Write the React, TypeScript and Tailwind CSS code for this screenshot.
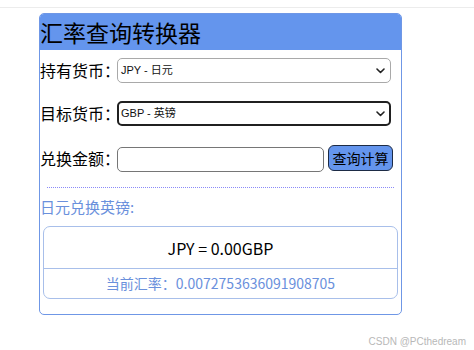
import React from "react";

const cjk = { fontFamily: '"Noto Sans CJK SC", "Noto Sans", sans-serif' };
const selFont = { fontFamily: '"Liberation Sans", "Noto Sans CJK SC", sans-serif' };

function Chevron() {
  return (
    <svg width="9" height="6" viewBox="0 0 9 6" className="shrink-0">
      <path d="M1 1 L4.5 4.5 L8 1" fill="none" stroke="#222" strokeWidth="1.6" strokeLinecap="round" strokeLinejoin="round" />
    </svg>
  );
}

function FakeSelect({ text, focused }: { text: string; focused?: boolean }) {
  return (
    <div
      className={
        focused
          ? "shrink-0 w-[274px] h-[25px] rounded-[5px] border-2 border-[#202020] bg-white flex items-center justify-between pl-[2px] pr-[4px]"
          : "shrink-0 w-[274px] h-[25px] rounded-[5px] border border-[#a9a9a9] bg-white flex items-center justify-between pl-[3px] pr-[5px]"
      }
    >
      <span className="text-[11px] text-[#111] whitespace-nowrap" style={selFont}>{text}</span>
      <Chevron />
    </div>
  );
}

export default function App() {
  return (
    <div className="relative w-[474px] h-[350px] bg-white overflow-hidden" style={cjk}>
      <div className="h-[8px] border-b border-[#ececec]" />
      <div className="ml-[39px] mt-[5px] w-[363px] h-[302px] border border-[#6f97e6] rounded-[5px] overflow-hidden">
        <div className="h-[36px] bg-[#6495ed] text-[23px] leading-[36px] text-black whitespace-nowrap">汇率查询转换器</div>
        <div className="flex items-center mt-[8px] h-[25px]">
          <div className="shrink-0 w-[77px] text-[16px] text-black leading-[25px] whitespace-nowrap">持有货币：</div>
          <FakeSelect text="JPY - 日元" />
        </div>
        <div className="flex items-center mt-[18px] h-[25px]">
          <div className="shrink-0 w-[77px] text-[16px] text-black leading-[25px] whitespace-nowrap">目标货币：</div>
          <FakeSelect text="GBP - 英镑" focused />
        </div>
        <div className="flex items-start mt-[19px] h-[27px]">
          <div className="shrink-0 w-[77px] text-[16px] text-black leading-[25px] mt-[1px] whitespace-nowrap">兑换金额：</div>
          <div className="shrink-0 mt-[2px] w-[207px] h-[25px] rounded-[5px] border-[1.5px] border-[#767676] bg-white" />
          <div className="shrink-0 ml-[4px] w-[65px] h-[26px] rounded-[6px] border-[1.5px] border-[#1d2b45] bg-[#6495ed] flex items-center justify-center text-[14px] text-black whitespace-nowrap">
            查询计算
          </div>
        </div>
        <div className="mt-[15px] mx-[7px] border-t border-dotted border-[#8a8af8]" />
        <div className="mt-[9px] text-[15px] leading-[20px] text-[#6a90dc] whitespace-nowrap">日元兑换英镑:</div>
        <div className="mt-[9px] mx-[3px] h-[73px] border border-[#a8bfea] rounded-[7px] flex flex-col">
          <div className="h-[42px] border-b border-[#a8bfea] flex items-center justify-center text-[16px] text-black whitespace-nowrap">
            JPY = 0.00GBP
          </div>
          <div className="flex-1 flex items-center justify-center text-[14px] text-[#6a90dc] whitespace-nowrap">
            当前汇率：0.0072753636091908705
          </div>
        </div>
      </div>
      <div className="absolute right-[8px] top-[334px] text-[10px] text-[#b8b8b8] whitespace-nowrap" style={{ fontFamily: '"Liberation Sans", sans-serif' }}>
        CSDN @PCthedream
      </div>
    </div>
  );
}
